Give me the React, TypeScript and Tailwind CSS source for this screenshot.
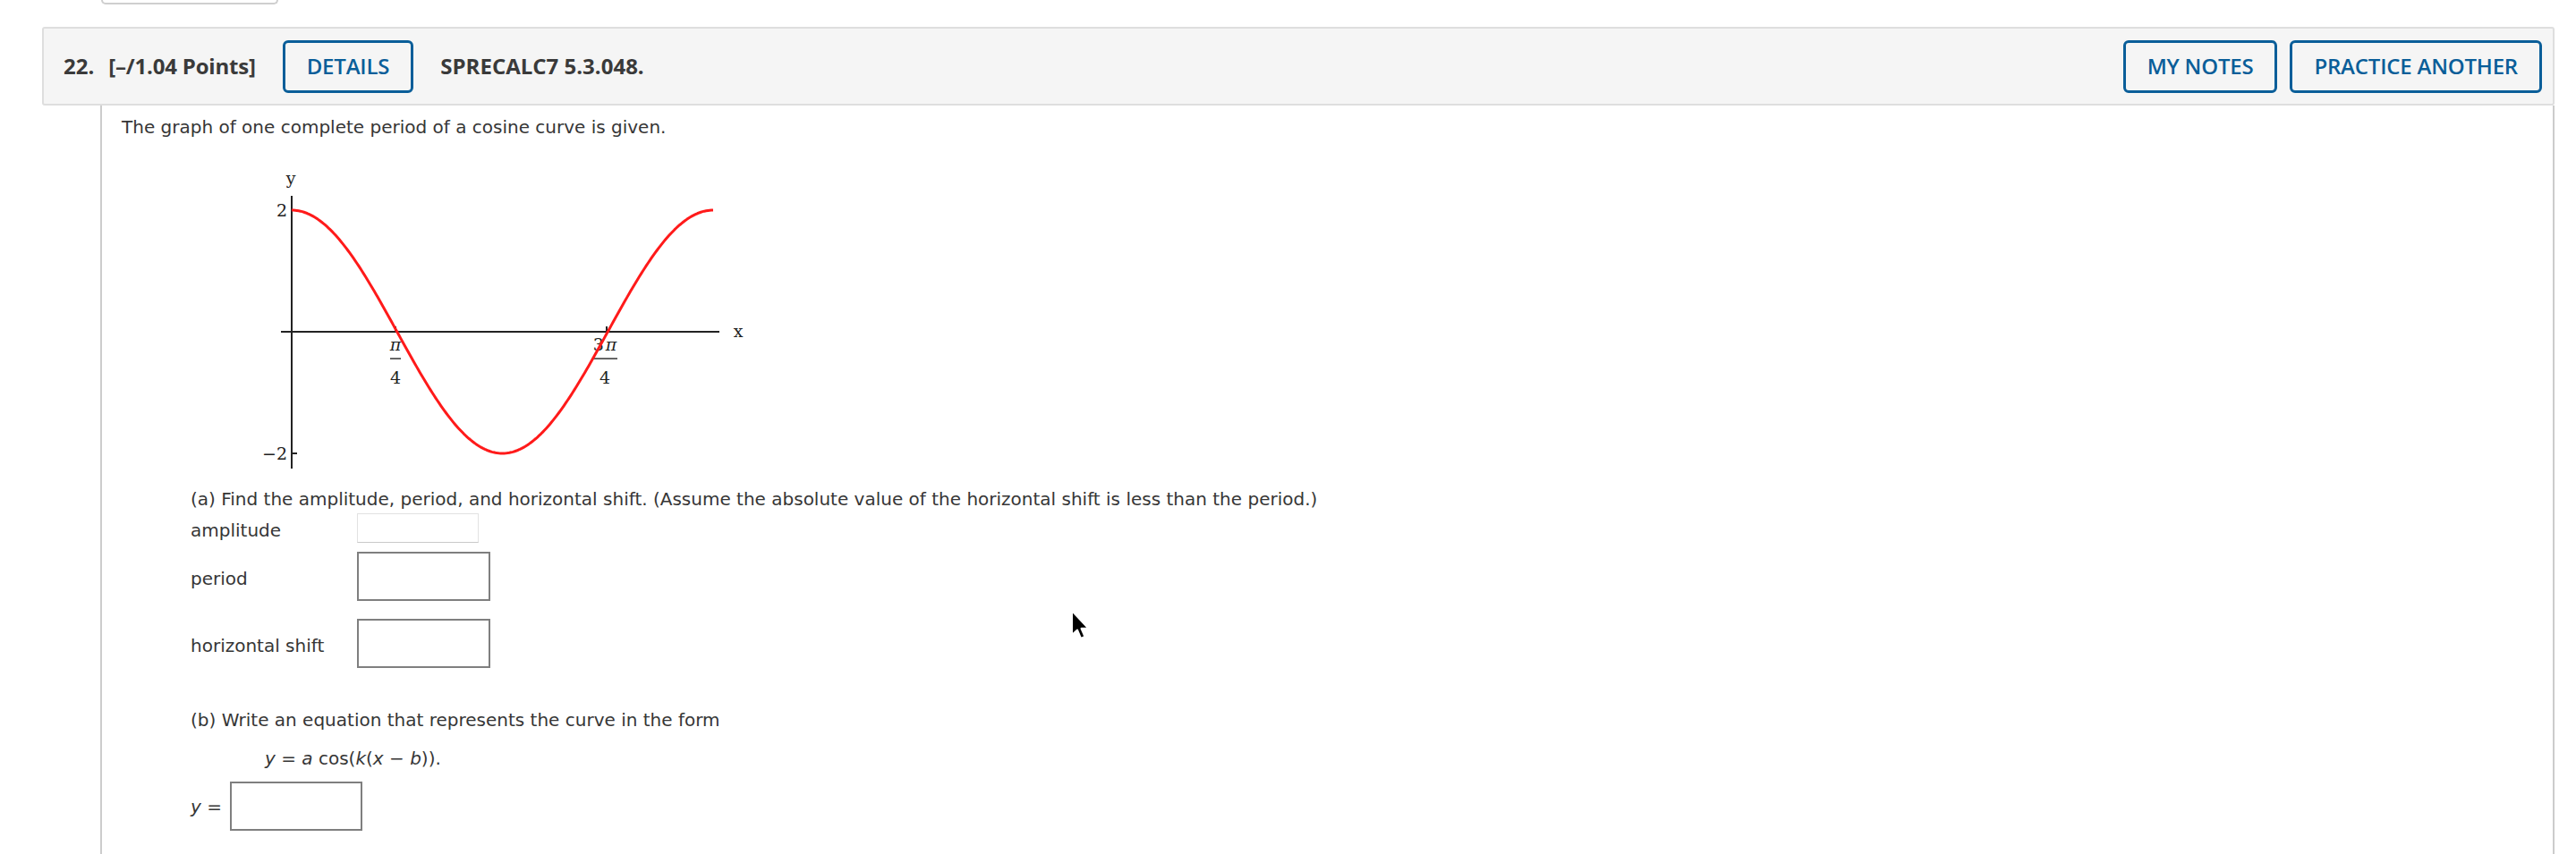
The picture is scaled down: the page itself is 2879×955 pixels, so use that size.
import React from "react";

const PERIOD = 471;
const AMP = 136;

function CosineGraph() {
  // page origin of the svg is (280, 180); axis origin sits at (46, 191)
  const pts: string[] = [];
  for (let i = 0; i <= 240; i++) {
    const x = 46 + (PERIOD * i) / 240;
    const y = 191 - AMP * Math.cos((2 * Math.PI * i) / 240);
    pts.push(`${x.toFixed(2)},${y.toFixed(2)}`);
  }

  return (
    <svg width="570" height="350" viewBox="0 0 570 350" className="block">
      <g fontFamily="'DejaVu Serif', serif" fontSize="19" fill="#222">
        <text x="45" y="19" textAnchor="middle" dominantBaseline="central">y</text>
        <text x="41" y="55" textAnchor="end" dominantBaseline="central">2</text>
        <text x="41" y="327" textAnchor="end" dominantBaseline="central">−2</text>
        <text x="545" y="190" textAnchor="middle" dominantBaseline="central">x</text>
        <text x="162" y="205" textAnchor="middle" dominantBaseline="central" fontStyle="italic">π</text>
        <text x="162" y="242" textAnchor="middle" dominantBaseline="central">4</text>
        <text x="396" y="205" textAnchor="middle" dominantBaseline="central">
          3<tspan fontStyle="italic" dx="2">π</tspan>
        </text>
        <text x="396" y="242" textAnchor="middle" dominantBaseline="central">4</text>
      </g>
      <g stroke="#222" strokeWidth="2" fill="none">
        <line x1="46" y1="39" x2="46" y2="344" />
        <line x1="34" y1="191" x2="524" y2="191" />
        <line x1="162" y1="185" x2="162" y2="191" />
        <line x1="398" y1="185" x2="398" y2="191" />
        <line x1="46" y1="55" x2="52" y2="55" />
        <line x1="46" y1="327" x2="52" y2="327" />
      </g>
      <g stroke="#333" strokeWidth="1.5">
        <line x1="156" y1="221" x2="168" y2="221" />
        <line x1="383" y1="221" x2="410" y2="221" />
      </g>
      <polyline points={pts.join(" ")} fill="none" stroke="#ff1a1a" strokeWidth="3" strokeLinejoin="round" />
    </svg>
  );
}

function OutlineButton({ label }: { label: string }) {
  return (
    <button className="h-[59px] px-[24px] border-[3px] border-[#0a5e99] rounded-[6px] text-[24px] font-semibold text-[#0a5e99] bg-transparent tracking-[-0.2px]">
      {label}
    </button>
  );
}

function AnswerBox() {
  return <div className="w-[149px] h-[55px] border-2 border-[#7f7f7f] bg-white" />;
}

function Row({ label, children }: { label: string; children: React.ReactNode }) {
  return (
    <div className="flex items-center">
      <span className="w-[186px] pt-[4px]">{label}</span>
      {children}
    </div>
  );
}

export default function App() {
  return (
    <div className="relative min-h-screen bg-white overflow-hidden">
      {/* tail of the previous question's button */}
      <div className="ml-[113px] w-[198px] h-[5px] border-x-2 border-b-2 border-[#cfcfcf] rounded-b-[7px]" />

      <header className="mt-[25px] ml-[47px] mr-[24px] h-[88px] bg-[#f5f5f5] border-2 border-[#dedede] rounded-[3px] flex items-center pl-[22px] pr-[12px] font-['Open_Sans',sans-serif] text-[#3a3a3a]">
        <span className="text-[24px] font-bold">22.</span>
        <span className="ml-[16px] text-[24px] font-bold tracking-[-0.2px]">[–/1.04 Points]</span>
        <div className="ml-[30px]">
          <OutlineButton label="DETAILS" />
        </div>
        <span className="ml-[30px] text-[24px] font-bold">SPRECALC7 5.3.048.</span>
        <div className="ml-auto flex gap-[14px]">
          <OutlineButton label="MY NOTES" />
          <OutlineButton label="PRACTICE ANOTHER" />
        </div>
      </header>

      <main className="ml-[112px] mr-[24px] min-h-[840px] border-x-2 border-[#cccccc] pl-[22px] pt-[12px] font-['DejaVu_Sans',Verdana,sans-serif] text-[20px] leading-[24px] text-[#363636]">
        <p>The graph of one complete period of a cosine curve is given.</p>

        <div className="ml-[144px] mt-[26px]">
          <CosineGraph />
        </div>

        <section className="ml-[77px] mt-[16px]">
          <p>
            (a) Find the amplitude, period, and horizontal shift. (Assume the absolute value of the horizontal shift is less
            than the period.)
          </p>

          <div className="mt-[4px] flex flex-col">
            <Row label="amplitude">
              <div className="w-[136px] h-[33px] border border-[#e2e2e2] border-b-[#c9c9c9] bg-white" />
            </Row>
            <div className="mt-[10px]">
              <Row label="period">
                <AnswerBox />
              </Row>
            </div>
            <div className="mt-[20px]">
              <Row label="horizontal shift">
                <AnswerBox />
              </Row>
            </div>
          </div>

          <p className="mt-[46px]">(b) Write an equation that represents the curve in the form</p>
          <p className="mt-[19px] ml-[83px]">
            <i>y</i> = <i>a</i> cos(<i>k</i>(<i>x</i> − <i>b</i>)).
          </p>

          <div className="mt-[14px] flex items-center">
            <span className="w-[44px]">
              <i>y</i> =
            </span>
            <div className="w-[148px] h-[55px] border-2 border-[#7f7f7f] bg-white" />
          </div>
        </section>
      </main>

      {/* mouse pointer */}
      <svg className="absolute left-[1193px] top-[681px]" width="26" height="38" viewBox="0 0 26 38">
        <path
          d="M5 2 L5 29 L11 23.5 L15 33 L19.5 31 L15.5 21.8 L23.5 21.8 Z"
          fill="#000"
          stroke="#fff"
          strokeWidth="2"
          strokeLinejoin="round"
        />
      </svg>
    </div>
  );
}
